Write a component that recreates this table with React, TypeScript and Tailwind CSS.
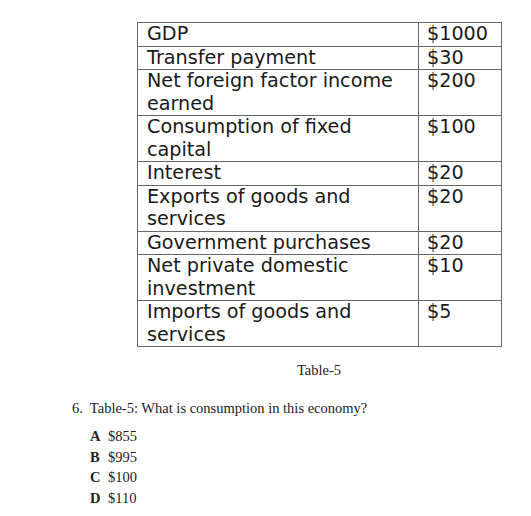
const rows: [string, string][] = [
  ['GDP', '$1000'],
  ['Transfer payment', '$30'],
  ['Net foreign factor income earned', '$200'],
  ['Consumption of fixed capital', '$100'],
  ['Interest', '$20'],
  ['Exports of goods and services', '$20'],
  ['Government purchases', '$20'],
  ['Net private domestic investment', '$10'],
  ['Imports of goods and services', '$5'],
];

const options: [string, string][] = [
  ['A', '$855'],
  ['B', '$995'],
  ['C', '$100'],
  ['D', '$110'],
];

export default function App() {
  return (
    <div className="w-[531px] h-[516px] bg-white text-[#1a1a1a] overflow-hidden">
      <div className="pt-[22px] pl-[137px]">
        <table className="border-collapse font-['DejaVu_Sans',sans-serif] text-[19.2px] leading-[22.5px]">
          <tbody>
            {rows.map(([label, value]) => (
              <tr key={label}>
                <td className="w-[281px] border border-[#666] pl-[9px] pr-2 align-top">{label}</td>
                <td className="w-[83px] border border-[#666] pl-[8px] align-top">{value}</td>
              </tr>
            ))}
          </tbody>
        </table>
      </div>
      <div className="font-['Liberation_Serif',serif] text-[14.5px] leading-[17px] text-[#222]">
        <p className="mt-[15px] pl-[297px]">Table-5</p>
        <p className="mt-[21px] pl-[72px]">6.&nbsp; Table-5: What is consumption in this economy?</p>
        <ul className="mt-[11px] pl-[90px] flex flex-col gap-[3.5px]">
          {options.map(([k, v]) => (
            <li key={k} className="flex gap-[6px]">
              <span className="font-bold w-[12px]">{k}</span>
              <span>{v}</span>
            </li>
          ))}
        </ul>
      </div>
    </div>
  );
}
